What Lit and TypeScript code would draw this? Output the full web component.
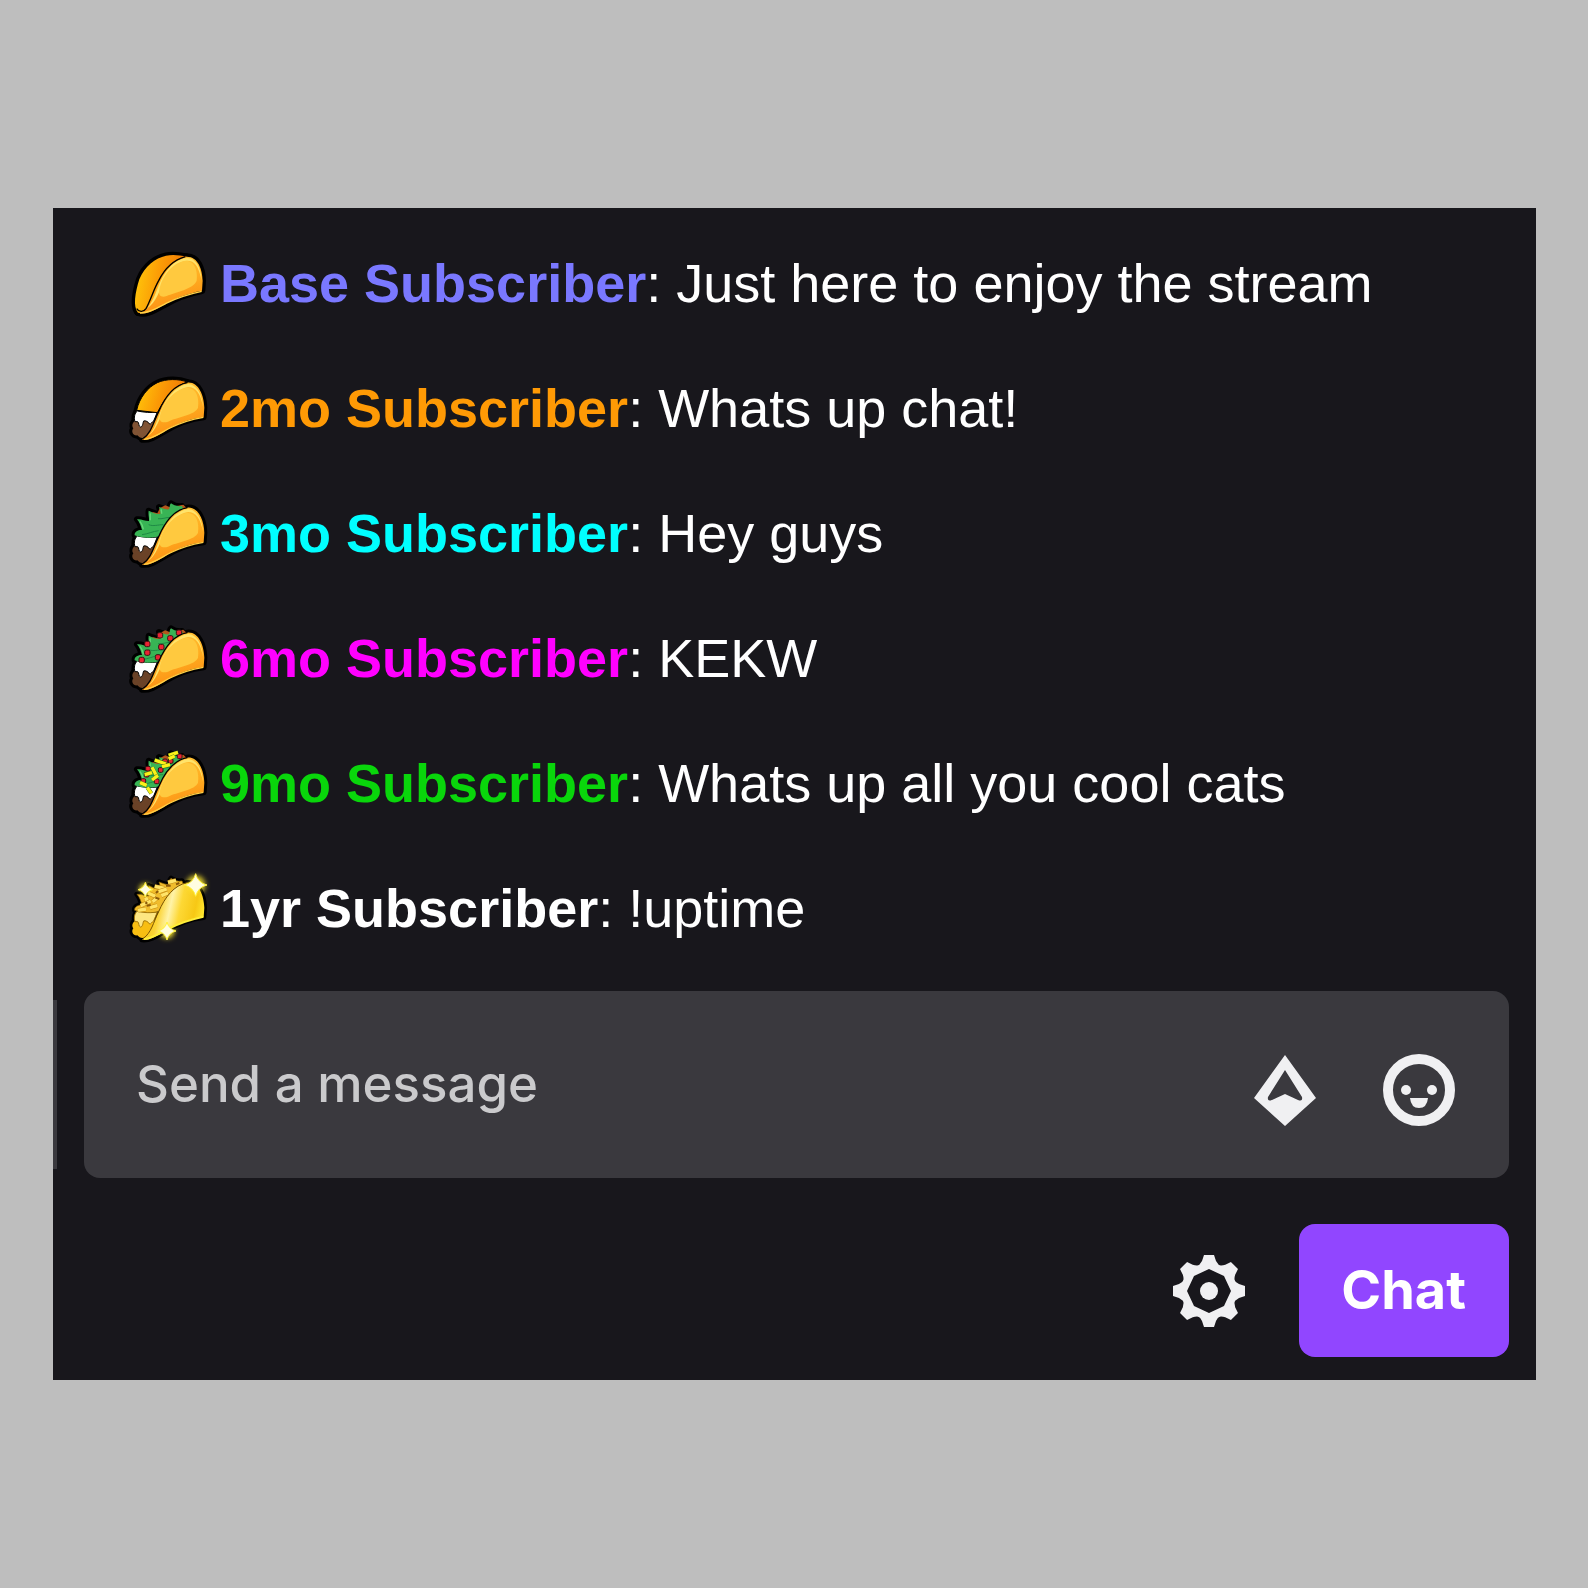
import { LitElement, html, css, svg } from "lit";
import { customElement, property } from "lit/decorators.js";

type Tier = "base" | "two" | "three" | "six" | "nine" | "year";

interface Message {
  tier: Tier;
  name: string;
  text: string;
}

const MESSAGES: Message[] = [
  { tier: "base", name: "Base Subscriber", text: "Just here to enjoy the stream" },
  { tier: "two", name: "2mo Subscriber", text: "Whats up chat!" },
  { tier: "three", name: "3mo Subscriber", text: "Hey guys" },
  { tier: "six", name: "6mo Subscriber", text: "KEKW" },
  { tier: "nine", name: "9mo Subscriber", text: "Whats up all you cool cats" },
  { tier: "year", name: "1yr Subscriber", text: "!uptime" },
];

const FRONT =
  "M66 224 C94 204 100 172 116 140 C134 98 162 60 202 53 C236 50 252 92 253 128 L251 157 C206 161 168 178 132 200 C110 213 90 227 66 224 Z";
const BACK = "M50 136 C58 98 84 66 112 53 C138 41 176 41 202 51 C162 64 134 100 112 143 Z";
const MEAT =
  "M46 168 C36 172 35 184 40 190 C32 200 40 213 52 211 C58 218 66 221 76 217 C92 208 100 190 106 166 Z";
const CREAM =
  "M45 170 C41 158 44 144 52 138 C72 142 92 144 112 141 L101 168 C96 170 93 178 89 177 C84 170 77 166 71 168 C68 174 69 186 61 186 C55 184 58 174 53 170 Z";
const LETTUCE =
  "M44 136 C42 126 54 119 66 120 C62 108 60 98 51 88 C64 86 76 94 87 93 C88 82 84 74 86 62 C96 66 108 74 121 72 C121 64 120 60 117 51 C126 54 138 60 147 58 C150 52 148 44 153 40 C160 45 170 50 186 48 L190 58 C160 74 134 104 118 138 C100 146 64 144 44 136 Z";

// A four-pointed sparkle centred on x, y.
const sparkle = (x: number, y: number, r: number) => {
  const k = r * 0.2;
  return `M${x} ${y - r} Q${x + k} ${y - k} ${x + r} ${y} Q${x + k} ${y + k} ${x} ${y + r} Q${x - k} ${y + k} ${x - r} ${y} Q${x - k} ${y - k} ${x} ${y - r} Z`;
};

const TOMATOES = [[120, 61], [177, 53], [151, 70], [82, 87], [124, 96], [82, 113], [114, 127], [65, 135]];
const TOMATOES_TOP = [[135, 64], [179, 49], [152, 63], [84, 86], [122, 90], [80, 104], [110, 124], [70, 123]];
const SHREDS = [
  [146, 46, 174, 37], [104, 60, 138, 72], [146, 56, 164, 48], [126, 80, 150, 74], [96, 82, 110, 108],
  [74, 104, 96, 98], [60, 128, 80, 136], [96, 120, 114, 106], [82, 142, 94, 160],
];
const GOLD_SHREDS = [
  [144, 52, 168, 46], [104, 64, 134, 70], [84, 84, 106, 94], [116, 80, 140, 72], [62, 122, 92, 108],
  [98, 110, 112, 98], [54, 136, 78, 132], [90, 128, 112, 122], [124, 92, 144, 84], [74, 104, 84, 100],
];

@customElement("taco-badge")
class TacoBadge extends LitElement {
  @property() tier: Tier = "base";

  static styles = css`
    :host {
      display: block;
      flex: none;
      line-height: 0;
    }
    svg {
      width: 82px;
      height: 70px;
      overflow: visible;
    }
  `;

  private defs() {
    return svg`<defs>
      <linearGradient id="back" x1="0" y1="0.4" x2="1" y2="0.6">
        <stop offset="0" stop-color="#ffc60a" /><stop offset="0.45" stop-color="#fb9a06" /><stop offset="1" stop-color="#ee7203" />
      </linearGradient>
      <linearGradient id="front" x1="0.3" y1="0" x2="0.6" y2="1">
        <stop offset="0" stop-color="#ffc53a" /><stop offset="0.5" stop-color="#ffac20" /><stop offset="1" stop-color="#fb8a12" />
      </linearGradient>
      <linearGradient id="gold" x1="0" y1="0.3" x2="1" y2="0.5">
        <stop offset="0" stop-color="#f6c000" /><stop offset="0.3" stop-color="#fbd437" /><stop offset="0.46" stop-color="#fff3a8" />
        <stop offset="0.62" stop-color="#fdd835" /><stop offset="0.85" stop-color="#f7c815" /><stop offset="1" stop-color="#ffe62e" />
      </linearGradient>
      <filter id="glow" x="-1" y="-1" width="3" height="3"><feGaussianBlur stdDeviation="8" /></filter>
    </defs>`;
  }

  private base() {
    const front =
      "M54 218 C84 206 92 168 108 134 C126 92 158 54 198 50 C234 48 247 88 248 122 L246 152 C204 160 166 174 130 196 C100 212 78 226 54 218 Z";
    const back = "M54 218 C38 200 46 156 58 118 C74 78 106 54 138 47 C160 43 180 46 200 50 C160 60 130 96 112 138 C98 172 84 218 54 218 Z";
    return svg`
      <g fill="#000" stroke="#000" stroke-width="20" stroke-linejoin="round"><path d=${front} /><path d=${back} /></g>
      <path d=${front} fill="url(#front)" />
      <path d=${back} fill="url(#back)" />
      <path d="M78 208 C104 182 110 142 130 108 C150 74 176 54 202 54 C230 54 244 88 245 122 C236 78 224 62 202 62 C176 64 152 84 136 114 C118 148 112 186 78 208 Z" fill="#ffe36a" />
      <path d="M60 219 C88 220 116 202 138 190 C170 174 208 162 245 154" fill="none" stroke="#ffd34a" stroke-width="4" />
      <path d="M118 150 C126 106 158 68 196 62 C224 62 234 92 230 122 C220 148 166 156 140 168 C124 174 114 166 118 150 Z" fill="#ffc93f" />
      <path d="M50 206 C56 216 70 218 78 206 C92 180 102 146 116 122 C134 86 160 60 196 50" fill="none" stroke="#000" stroke-width="4" />
    `;
  }

  private front() {
    return svg`
      <path d=${FRONT} fill="url(#front)" />
      <path d="M80 216 C106 196 112 158 128 126 C146 88 176 60 204 57 C232 58 248 92 249 126 C242 86 228 66 204 66 C178 69 156 92 137 124 C118 158 112 196 80 216 Z" fill="#ffe36a" />
      <path d="M72 223 C98 222 124 202 150 189 C182 173 214 163 250 157" fill="none" stroke="#ffcf45" stroke-width="4" />
      <path d="M120 152 C130 110 164 72 202 68 C230 70 238 98 234 128 C226 150 170 156 144 170 C126 176 116 168 120 152 Z" fill="#ffc93f" />
      <path d="M70 220 C94 204 100 172 116 140 C134 98 162 60 202 53" fill="none" stroke="#000" stroke-width="4" />
    `;
  }

  private filled() {
    const t = this.tier;
    const greens = t !== "two";
    const outline = [FRONT, greens ? LETTUCE : BACK, MEAT, CREAM];
    return svg`
      <g fill="#000" stroke="#000" stroke-width="18" stroke-linejoin="round">${outline.map((d) => svg`<path d=${d} />`)}</g>
      <path d=${MEAT} fill=${greens ? "#6a4227" : "#805334"} />
      <path d=${CREAM} fill="#fff" stroke="#000" stroke-width="3" />
      ${greens
        ? svg`
          <path d="M88 84 L98 66 L112 70 L120 54 L136 46 L150 52 L190 44 L200 54 L120 100 Z" fill="#b4561c" />
          <path d=${LETTUCE} fill="#38b455" />
          <path d="M66 134 C84 132 98 124 116 122 M86 104 C100 110 114 104 130 104 M114 86 C126 88 138 82 150 82" fill="none" stroke="#1f8a46" stroke-width="3" />
          <path d="M70 118 C69 110 66 102 60 94 M91 91 C91 82 90 76 91 70 M125 71 C125 65 125 62 123 58" fill="none" stroke="#66d97a" stroke-width="4" />`
        : svg`<path d=${BACK} fill="url(#back)" stroke="#000" stroke-width="3" />`}
      ${t === "six"
        ? TOMATOES.map(([x, y]) => svg`<rect x=${x - 8} y=${y - 8} width="16" height="16" rx="5" fill="#ea2433" stroke="#3a1212" stroke-width="3" />`)
        : null}
      ${t === "nine"
        ? svg`
          ${TOMATOES_TOP.map(([x, y]) => svg`<rect x=${x - 7} y=${y - 7} width="14" height="14" rx="4" fill="#ea2433" stroke="#3a1212" stroke-width="3" />`)}
          <g>
            ${SHREDS.map(([a, b, c, d]) => svg`<path d="M${a} ${b} L${c} ${d}" stroke="#3d6a12" stroke-width="12" /><path d="M${a} ${b} L${c} ${d}" stroke="#fbf21a" stroke-width="10" />`)}
          </g>`
        : null}
      ${this.front()}
    `;
  }

  private golden() {
    const stars: [number, number, number][] = [[227, 60, 34], [76, 74, 22], [141, 198, 27]];
    return svg`
      <g fill="#ffe92e" opacity="0.6" filter="url(#glow)">${stars.map(([x, y, r]) => svg`<circle cx=${x} cy=${y} r=${r * 0.9} />`)}</g>
      <g fill="#000" stroke="#000" stroke-width="16" stroke-linejoin="round">
        <path d=${FRONT} /><path d=${LETTUCE} /><path d=${MEAT} /><path d=${CREAM} />
      </g>
      <path d=${MEAT} fill="#f8be12" />
      <path d=${CREAM} fill="#fde682" stroke="#a87a08" stroke-width="3" />
      <path d=${LETTUCE} fill="#f0bc2c" stroke="#8a6206" stroke-width="2" />
      <g>
        ${GOLD_SHREDS.map(([a, b, c, d]) => svg`<path d="M${a} ${b} L${c} ${d}" stroke="#c48a10" stroke-width="13" /><path d="M${a} ${b} L${c} ${d}" stroke="#ffe468" stroke-width="10" />`)}
      </g>
      <path d="M80 122 L92 120 M106 98 L118 102 M138 62 L152 62 M76 116 L82 112 M114 78 L108 84 M168 58 L178 54" stroke="#8a5808" stroke-width="6" />
      <path d=${FRONT} fill="url(#gold)" />
      <path d="M72 222 C98 220 124 202 150 189 C182 173 214 163 250 155" fill="none" stroke="#ffee3a" stroke-width="6" />
      <path d="M70 220 C94 204 100 172 116 140 C134 98 162 60 202 53" fill="none" stroke="#7a5404" stroke-width="3" />
      <g fill="#fff02a" opacity="0.8" filter="url(#glow)">${stars.map(([x, y, r]) => svg`<circle cx=${x} cy=${y} r=${r * 0.6} />`)}</g>
      <g fill="#fffde0" stroke="#fff13a" stroke-width="3">${stars.map(([x, y, r]) => svg`<path d=${sparkle(x, y, r)} />`)}</g>
    `;
  }

  render() {
    const art = this.tier === "base" ? this.base() : this.tier === "year" ? this.golden() : this.filled();
    return html`<svg viewBox="24 30 246 210" aria-hidden="true">${this.defs()}${art}</svg>`;
  }
}

@customElement("app-root")
class AppRoot extends LitElement {
  static styles = css`
    :host {
      display: grid;
      align-content: center;
      box-sizing: border-box;
      min-height: 100vh;
      padding: 52px 52px 52px 53px;
      background: #bebebe;
      font-family: "Liberation Sans", Arial, sans-serif;
    }
    .panel {
      position: relative;
      display: flex;
      flex-direction: column;
      padding: 14px 27px 23px 31px;
      background: #18171c;
      color: #fff;
    }
    .messages {
      list-style: none;
      margin: 0 0 19px;
      padding: 0 0 0 44px;
    }
    .message {
      display: flex;
      align-items: center;
      gap: 10px;
      min-height: 125px;
      font-size: 54px;
      line-height: 62px;
    }
    .line {
      padding-bottom: 4px;
    }
    .base { color: #7a78ff; }
    .two { color: #ff9a05; }
    .three { color: #00ffff; }
    .six { color: #ff00ff; }
    .nine { color: #09d60b; }
    .year { color: #ffffff; }
    .edge {
      position: absolute;
      left: 0;
      bottom: 211px;
      width: 4px;
      height: 169px;
      background: #3a393e;
    }
    .composer {
      display: flex;
      gap: 66px;
      padding: 50px 54px 52px 52px;
      border-radius: 16px;
      background: #3a393e;
      align-items: end;
    }
    .field {
      flex: 1;
      min-width: 0;
      height: 85px;
      box-sizing: border-box;
      padding: 0;
      border: 0;
      outline: 0;
      background: none;
      color: #efeff1;
      font: 500 51px/64px Inter, sans-serif;
    }
    .field::placeholder {
      color: #cacacc;
      opacity: 1;
    }
    .icon {
      display: block;
      flex: none;
      padding: 0;
      border: 0;
      background: none;
      color: #f0f0f2;
      line-height: 0;
    }
    .icon svg {
      width: 72px;
      height: 72px;
    }
    .tools {
      display: flex;
      gap: 63px;
    }
    .actions {
      display: flex;
      justify-content: flex-end;
      align-items: center;
      gap: 54px;
      margin-top: 46px;
    }
    .send {
      padding: 33px 43px 35px 42px;
      border: 0;
      border-radius: 16px;
      background: #9146ff;
      color: #fff;
      font: 700 54px/65px Inter, sans-serif;
    }
  `;

  private gear() {
    const teeth = [0, 45, 90, 135, 180, 225, 270, 315];
    return html`<svg viewBox="-36 -36 72 72" aria-hidden="true">
      <g fill="currentColor">
        ${teeth.map((a) => svg`<path transform="rotate(${a})" d="M-5 -36 H5 L7 -30 Q9 -26 13 -24 L8 -22 H-8 L-13 -24 Q-9 -26 -7 -30 Z" />`)}
        <path fill-rule="evenodd" d="M0 -27 L19 -19 L27 0 L19 19 L0 27 L-19 19 L-27 0 L-19 -19 Z M0 -22 L-15 -15 L-22 0 L-15 15 L0 22 L15 15 L22 0 L15 -15 Z" />
        <circle r="9" />
      </g>
    </svg>`;
  }

  render() {
    return html`
      <main class="panel">
        <span class="edge"></span>
        <ul class="messages">
          ${MESSAGES.map(
            (m) => html`<li class="message">
              <taco-badge .tier=${m.tier}></taco-badge>
              <span class="line"><b class=${m.tier}>${m.name}</b>: ${m.text}</span>
            </li>`
          )}
        </ul>
        <div class="composer">
          <input class="field" type="text" placeholder="Send a message" aria-label="Send a message" />
          <div class="tools">
            <button class="icon" type="button" aria-label="Bits">
              <svg viewBox="0 0 72 72" aria-hidden="true">
                <path fill="currentColor" fill-rule="evenodd" d="M37 1 L68 44 L37 72 L6 44 Z M37 16 L20 43 Q19 48 24 46 L37 40 L50 46 Q55 48 54 43 Z" />
              </svg>
            </button>
            <button class="icon" type="button" aria-label="Emotes">
              <svg viewBox="0 0 72 72" aria-hidden="true">
                <circle cx="36" cy="36" r="31" fill="none" stroke="currentColor" stroke-width="10" />
                <circle cx="23" cy="36" r="5" fill="currentColor" />
                <circle cx="49" cy="36" r="5" fill="currentColor" />
                <path d="M27 44 H45 Q44 54 36 54 Q28 54 27 44 Z" fill="currentColor" />
              </svg>
            </button>
          </div>
        </div>
        <div class="actions">
          <button class="icon" type="button" aria-label="Chat settings">${this.gear()}</button>
          <button class="send" type="button">Chat</button>
        </div>
      </main>
    `;
  }
}
